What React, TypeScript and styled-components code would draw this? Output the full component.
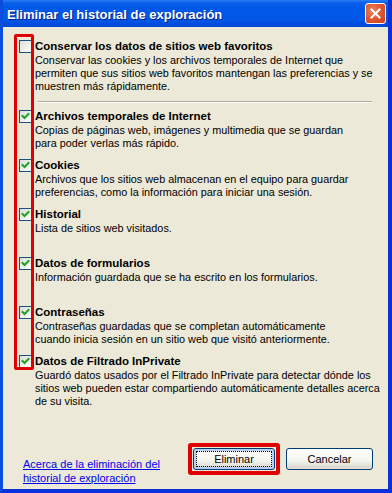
import React from "react";
import styled, { createGlobalStyle } from "styled-components";

type Option = {
  title: string;
  lines: string[];
  checked: boolean;
};

const options: Option[] = [
  {
    title: "Conservar los datos de sitios web favoritos",
    lines: [
      "Conservar las cookies y los archivos temporales de Internet que",
      "permiten que sus sitios web favoritos mantengan las preferencias y se",
      "muestren más rápidamente.",
    ],
    checked: false,
  },
  {
    title: "Archivos temporales de Internet",
    lines: [
      "Copias de páginas web, imágenes y multimedia que se guardan",
      "para poder verlas más rápido.",
    ],
    checked: true,
  },
  {
    title: "Cookies",
    lines: [
      "Archivos que los sitios web almacenan en el equipo para guardar",
      "preferencias, como la información para iniciar una sesión.",
    ],
    checked: true,
  },
  {
    title: "Historial",
    lines: ["Lista de sitios web visitados."],
    checked: true,
  },
  {
    title: "Datos de formularios",
    lines: ["Información guardada que se ha escrito en los formularios."],
    checked: true,
  },
  {
    title: "Contraseñas",
    lines: [
      "Contraseñas guardadas que se completan automáticamente",
      "cuando inicia sesión en un sitio web que visitó anteriormente.",
    ],
    checked: true,
  },
  {
    title: "Datos de Filtrado InPrivate",
    lines: [
      "Guardó datos usados por el Filtrado InPrivate para detectar dónde los",
      "sitios web pueden estar compartiendo automáticamente detalles acerca",
      "de su visita.",
    ],
    checked: true,
  },
];

const GlobalStyle = createGlobalStyle`
  html, body {
    margin: 0;
    padding: 0;
    background: #ece9d8;
  }
  body {
    font-family: "Liberation Sans", Arial, sans-serif;
    font-size: 11px;
    color: #000;
  }
`;

const CheckBox: React.FC<{ checked: boolean }> = ({ checked }) => (
  <Box>
    {checked && (
      <svg width="11" height="11" viewBox="0 0 11 11">
        <path
          d="M2.5 5 L4.5 7 L8.5 3"
          fill="none"
          stroke="#21a121"
          strokeWidth="2"
          strokeLinecap="square"
        />
      </svg>
    )}
  </Box>
);

const App: React.FC = () => {
  const [first, ...rest] = options;

  const renderItem = (opt: Option, big: boolean) => (
    <Item key={opt.title} $slot={big ? 0 : 49}>
      <CheckBox checked={opt.checked} />
      <ItemText>
        <ItemTitle>{opt.title}</ItemTitle>
        {opt.lines.map((l) => (
          <ItemLine key={l}>{l}</ItemLine>
        ))}
      </ItemText>
    </Item>
  );

  return (
    <>
      <GlobalStyle />
      <Window>
        <TitleBar>
          <TitleText>Eliminar el historial de exploración</TitleText>
          <CloseButton>
            <svg width="11" height="11" viewBox="0 0 11 11">
              <path
                d="M1.5 1.5 L9.5 9.5 M9.5 1.5 L1.5 9.5"
                stroke="#fff"
                strokeWidth="2"
                strokeLinecap="square"
              />
            </svg>
          </CloseButton>
        </TitleBar>
        <Body>
          <List>
            <Highlight />
            {renderItem(first, true)}
            <Separator />
            {rest.map((o) => renderItem(o, false))}
          </List>
          <Footer>
            <HelpLink href="#">
              Acerca de la eliminación del
              <br />
              historial de exploración
            </HelpLink>
            <Buttons>
              <Marked>
                <Button $focused $width={82}>
                  Eliminar
                </Button>
              </Marked>
              <Button $width={87}>Cancelar</Button>
            </Buttons>
          </Footer>
        </Body>
      </Window>
    </>
  );
};

export default App;

const Window = styled.div`
  width: 392px;
  height: 493px;
  box-sizing: border-box;
  display: flex;
  flex-direction: column;
  background: #ece9d8;
  border: 4px solid #0a4ee0;
  border-top: 0;
  border-left-width: 3px;
  border-right-color: #0831d9;
  border-bottom-color: #0831d9;
  overflow: hidden;
`;

const TitleBar = styled.div`
  height: 27px;
  margin: 0 -4px 0 -3px;
  padding: 0 6px 0 7px;
  display: flex;
  align-items: center;
  justify-content: space-between;
  background: linear-gradient(
    #2b7cf4 0px,
    #0a5fe8 3px,
    #0058e8 8px,
    #0256e6 20px,
    #0048d8 27px
  );
`;

const TitleText = styled.div`
  font-family: "Liberation Sans", Arial, sans-serif;
  font-weight: bold;
  font-size: 13px;
  color: #fff;
  text-shadow: 1px 1px 0 #0a1e80;
  padding-top: 1px;
`;

const CloseButton = styled.div`
  width: 21px;
  height: 21px;
  box-sizing: border-box;
  border: 1px solid #fff;
  border-radius: 3px;
  background: radial-gradient(circle at 35% 35%, #ea8466 0%, #e05a35 45%, #c8401b 100%);
  display: flex;
  align-items: center;
  justify-content: center;
`;

const Body = styled.div`
  flex: 1;
  display: flex;
  flex-direction: column;
  padding: 12px 0 0 15px;
`;

const List = styled.div`
  position: relative;
  display: flex;
  flex-direction: column;
`;

const Highlight = styled.div`
  position: absolute;
  left: -4px;
  top: -5px;
  width: 20px;
  height: 336px;
  box-sizing: border-box;
  border: 3px solid #e00000;
  border-radius: 2px;
  pointer-events: none;
`;

const Item = styled.div<{ $slot: number }>`
  display: flex;
  align-items: flex-start;
  gap: 4px;
  min-height: ${(p) => p.$slot}px;
`;

const Box = styled.div`
  width: 13px;
  height: 13px;
  margin-top: 1px;
  margin-left: 1px;
  box-sizing: border-box;
  border: 1px solid #1c5180;
  background: linear-gradient(135deg, #dcdcd7 0%, #ffffff 100%);
  display: flex;
  align-items: center;
  justify-content: center;
  flex: none;
`;

const ItemText = styled.div`
  display: flex;
  flex-direction: column;
  margin-left: -1px;
`;

const ItemTitle = styled.div`
  font-weight: bold;
  font-size: 11.5px;
  line-height: 16px;
  margin-top: -1px;
`;

const ItemLine = styled.div`
  font-size: 10.85px;
  line-height: 13px;
  white-space: nowrap;
`;

const Separator = styled.div`
  margin: 8px 16px 6px 20px;
  height: 1px;
  background: #aca899;
  border-bottom: 1px solid #fff;
`;

const Footer = styled.div`
  margin-top: auto;
  display: flex;
  align-items: flex-end;
  justify-content: space-between;
  padding: 0 15px 4px 5px;
`;

const HelpLink = styled.a`
  color: #0000ee;
  line-height: 14px;
  text-decoration: underline;
`;

const Buttons = styled.div`
  display: flex;
  align-items: center;
  gap: 6px;
  margin-bottom: 10px;
`;

const Marked = styled.div`
  padding: 1px;
  border: 4px solid #e00000;
  border-radius: 3px;
`;

const Button = styled.button<{ $focused?: boolean; $width: number }>`
  width: ${(p) => p.$width}px;
  height: 22px;
  font-family: "Liberation Sans", Arial, sans-serif;
  font-size: 11px;
  color: #000;
  border: 1px solid #003c74;
  border-radius: 3px;
  background: linear-gradient(#ffffff 0%, #f4f4f0 60%, #d6d0c5 100%);
  outline: ${(p) => (p.$focused ? "1px dotted #000" : "none")};
  outline-offset: -4px;
  box-shadow: ${(p) =>
    p.$focused ? "inset 0 0 0 2px #b8d0f4" : "inset 0 -1px 0 #e3e2da"};
  padding: 0;
`;
